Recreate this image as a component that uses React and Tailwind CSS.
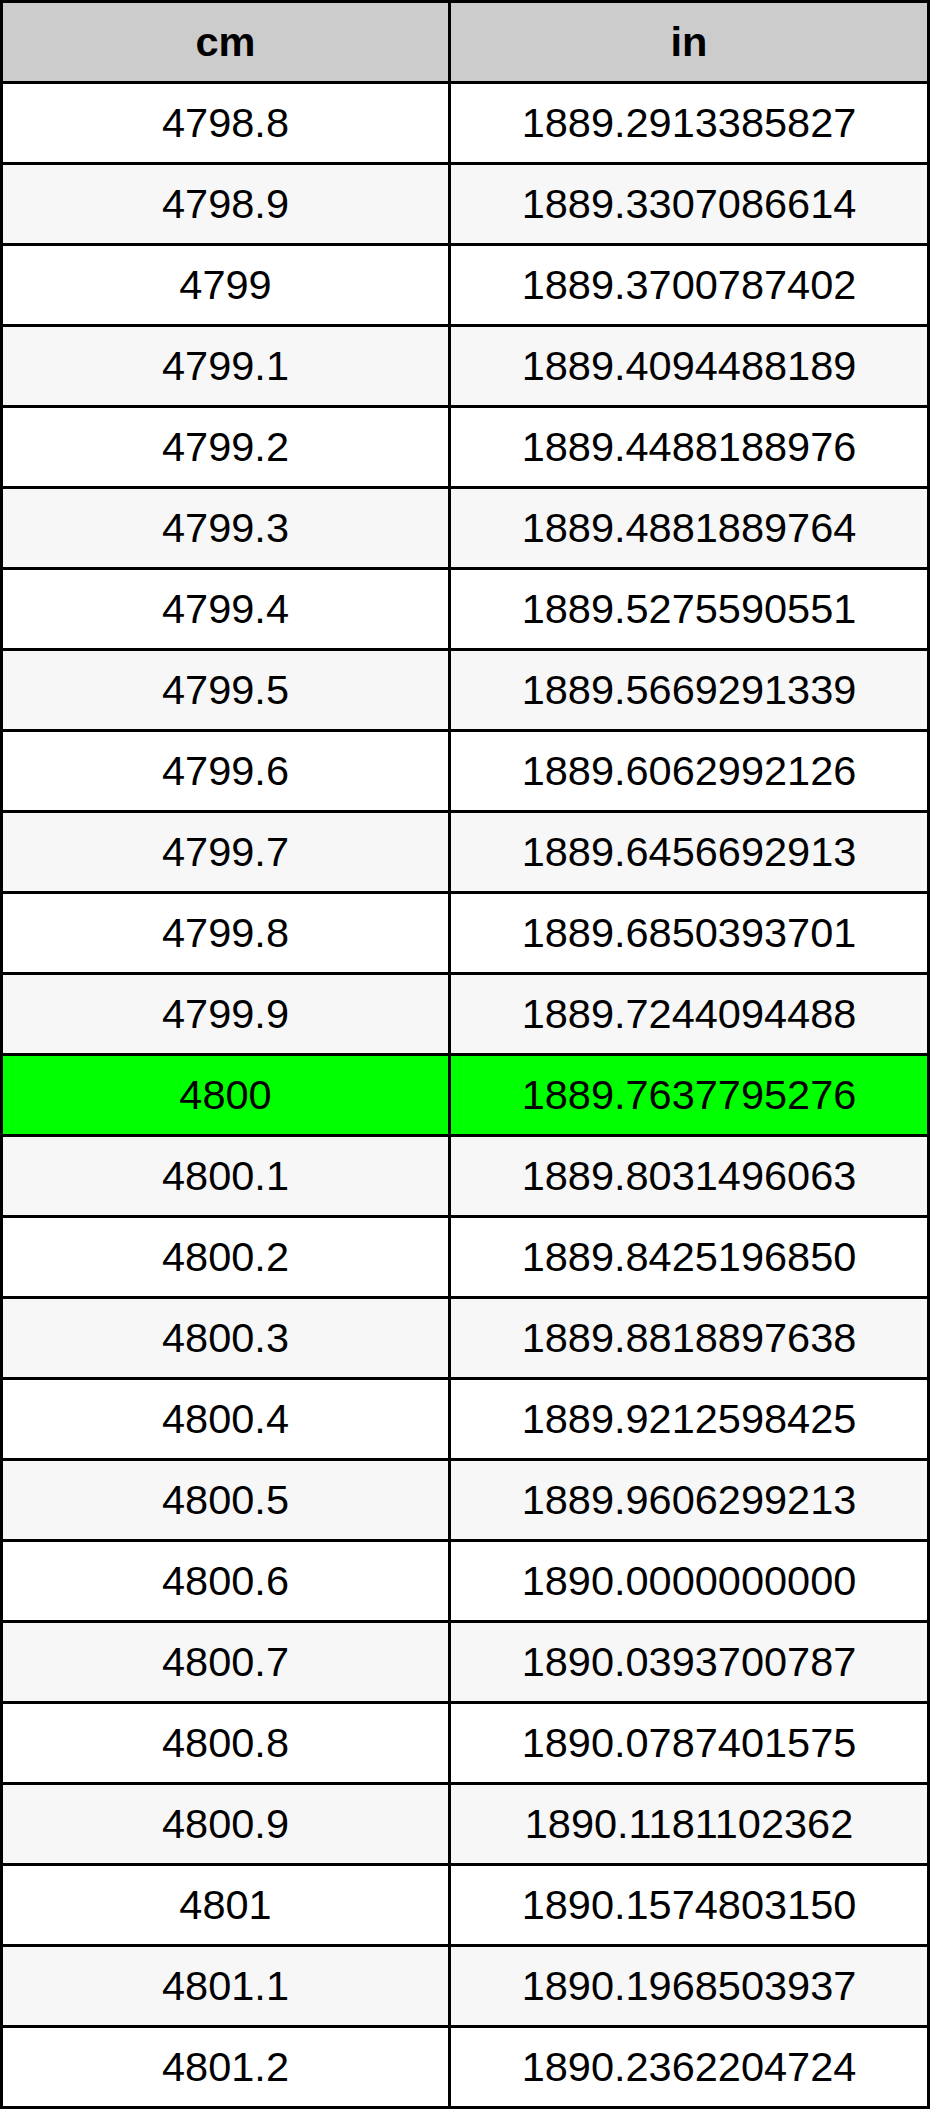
const rows = [
  ["4798.8", "1889.2913385827"],
  ["4798.9", "1889.3307086614"],
  ["4799", "1889.3700787402"],
  ["4799.1", "1889.4094488189"],
  ["4799.2", "1889.4488188976"],
  ["4799.3", "1889.4881889764"],
  ["4799.4", "1889.5275590551"],
  ["4799.5", "1889.5669291339"],
  ["4799.6", "1889.6062992126"],
  ["4799.7", "1889.6456692913"],
  ["4799.8", "1889.6850393701"],
  ["4799.9", "1889.7244094488"],
  ["4800", "1889.7637795276"],
  ["4800.1", "1889.8031496063"],
  ["4800.2", "1889.8425196850"],
  ["4800.3", "1889.8818897638"],
  ["4800.4", "1889.9212598425"],
  ["4800.5", "1889.9606299213"],
  ["4800.6", "1890.0000000000"],
  ["4800.7", "1890.0393700787"],
  ["4800.8", "1890.0787401575"],
  ["4800.9", "1890.1181102362"],
  ["4801", "1890.1574803150"],
  ["4801.1", "1890.1968503937"],
  ["4801.2", "1890.2362204724"],
];

const Row = ({ cm, inch, className, bold }) => (
  <div className={`flex h-[81px] ${className}`}>
    <div
      className={`flex w-[448px] items-center justify-center border-r-[3px] border-b-[3px] border-black ${bold ? "font-bold" : ""}`}
    >
      {cm}
    </div>
    <div
      className={`flex flex-1 items-center justify-center border-r-[3px] border-b-[3px] border-black ${bold ? "font-bold" : ""}`}
    >
      {inch}
    </div>
  </div>
);

export default function App() {
  return (
    <div className="w-[930px] bg-white">
      <div className="border-l-[3px] border-t-[3px] border-black font-['Liberation_Sans',Arial,sans-serif] text-[41.5px] text-black">
        <Row cm="cm" inch="in" className="bg-[#cccccc]" bold />
        {rows.map(([cm, inch], i) => (
          <Row
            key={cm}
            cm={cm}
            inch={inch}
            className={
              cm === "4800"
                ? "bg-[#00ff00]"
                : i % 2 === 0
                  ? "bg-white"
                  : "bg-[#f7f7f7]"
            }
          />
        ))}
      </div>
    </div>
  );
}
